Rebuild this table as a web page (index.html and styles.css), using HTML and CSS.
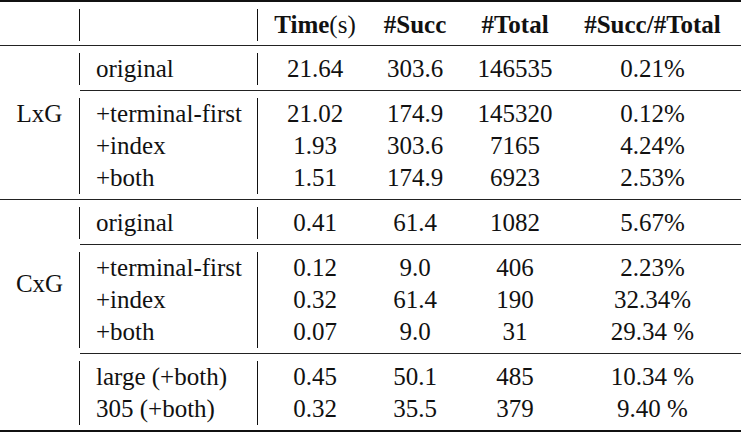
FILE: index.html
```html
<html>
    <head>
        <title> results </title>
        <link rel="stylesheet" href="styles.css">
    </head>
    <body>
        <div class="table">
            <div class="rule thick"></div>
            <div class="section head">
                <div class="cell grp"></div>
                <div class="cell name"></div>
                <div class="cell time"><strong>Time</strong>(s)</div>
                <div class="cell"><strong>#Succ</strong></div>
                <div class="cell"><strong>#Total</strong></div>
                <div class="cell ratio"><strong>#Succ/#Total</strong></div>
            </div>
            <div class="rule"></div>

            <!-- LxG -->
            <div class="section">
                <div class="cell grp"></div>
                <div class="cell name">original</div>
                <div class="cell time">21.64</div>
                <div class="cell">303.6</div>
                <div class="cell">146535</div>
                <div class="cell ratio">0.21%</div>
            </div>
            <div class="rule partial"></div>
            <div class="section">
                <div class="cell grp span3">LxG</div>
                <div class="cell name">+terminal-first</div>
                <div class="cell time">21.02</div>
                <div class="cell">174.9</div>
                <div class="cell">145320</div>
                <div class="cell ratio">0.12%</div>
                <div class="cell name">+index</div>
                <div class="cell time">1.93</div>
                <div class="cell">303.6</div>
                <div class="cell">7165</div>
                <div class="cell ratio">4.24%</div>
                <div class="cell name">+both</div>
                <div class="cell time">1.51</div>
                <div class="cell">174.9</div>
                <div class="cell">6923</div>
                <div class="cell ratio">2.53%</div>
            </div>
            <div class="rule"></div>

            <!-- CxG -->
            <div class="section">
                <div class="cell grp"></div>
                <div class="cell name">original</div>
                <div class="cell time">0.41</div>
                <div class="cell">61.4</div>
                <div class="cell">1082</div>
                <div class="cell ratio">5.67%</div>
            </div>
            <div class="rule partial"></div>
            <div class="section">
                <div class="cell grp span3 low">CxG</div>
                <div class="cell name">+terminal-first</div>
                <div class="cell time">0.12</div>
                <div class="cell">9.0</div>
                <div class="cell">406</div>
                <div class="cell ratio">2.23%</div>
                <div class="cell name">+index</div>
                <div class="cell time">0.32</div>
                <div class="cell">61.4</div>
                <div class="cell">190</div>
                <div class="cell ratio">32.34%</div>
                <div class="cell name">+both</div>
                <div class="cell time">0.07</div>
                <div class="cell">9.0</div>
                <div class="cell">31</div>
                <div class="cell ratio">29.34 %</div>
            </div>
            <div class="rule partial"></div>
            <div class="section">
                <div class="cell grp span2"></div>
                <div class="cell name">large (+both)</div>
                <div class="cell time">0.45</div>
                <div class="cell">50.1</div>
                <div class="cell">485</div>
                <div class="cell ratio">10.34 %</div>
                <div class="cell name">305 (+both)</div>
                <div class="cell time">0.32</div>
                <div class="cell">35.5</div>
                <div class="cell">379</div>
                <div class="cell ratio">9.40 %</div>
            </div>
            <div class="rule thick"></div>
        </div>
    </body>
</html>
```

FILE: styles.css
```css
body {
    margin: 0;
    background: #FFFFFF;
    color: #111;
    font-family: "Liberation Serif", "Times New Roman", serif;
    font-size: 25px;
}
.table {
    width: 741px;
}
/* horizontal rules, booktabs style */
.rule {
    border-top: 1px solid #222;
}
.rule.thick {
    border-top: 2px solid #111;
}
/* cline that leaves the group column open */
.rule.partial {
    margin-left: 80px;
}
/* a block of rows between two rules */
.section {
    display: grid;
    grid-template-columns: 79px 178px 115px 86px 114px 169px;
    grid-auto-rows: 32px;
    padding: 7px 0 5px 0;
}
.section.head {
    padding-bottom: 4px;
}
.cell {
    display: flex;
    align-items: center;
    justify-content: center;
    line-height: 32px;
    white-space: nowrap;
}
.cell strong {
    font-weight: bold;
}
.name {
    justify-content: flex-start;
    padding-left: 16px;
    border-left: 1px solid #111;
}
.time {
    border-left: 1px solid #111;
}
.ratio {
    padding-right: 8px;
}
/* group label (LxG / CxG) */
.grp {
    align-items: flex-start;
}
.grp.span3 {
    grid-row: span 3;
}
.grp.span2 {
    grid-row: span 2;
}
.grp.low {
    padding-top: 16px;
}
```
